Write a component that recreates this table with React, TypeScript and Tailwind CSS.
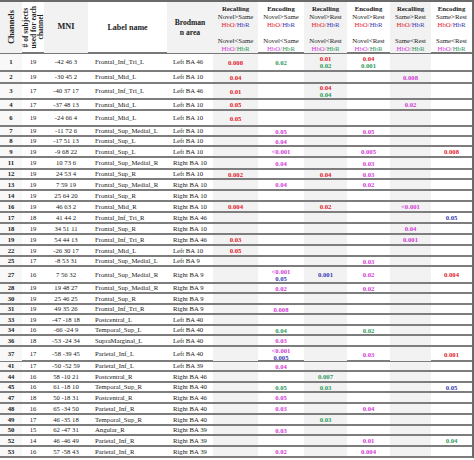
import React from "react";

type Tone = "r" | "g" | "m" | "b";
type Val = [string, Tone][] | null;

const tone: Record<Tone, string> = {
   r: "text-[#e41a2c]",
   g: "text-[#2f9a5c]",
   m: "text-[#d33ad9]",
   b: "text-[#3b3bb5]",
};

type Row = {
   ch: string;
   n: string;
   mni: string;
   label: string;
   ba: string;
   h: string;
   vals: Val[];
};

const _ = null;

const rows: Row[] = [
   { ch: "1", n: "19", mni: "-42 46 3", label: "Frontal_Inf_Tri_L", ba: "Left BA 46", h: "h-[18px]", vals: [[["0.008", "r"]], [["0.02", "g"]], [["0.01", "r"], ["0.02", "g"]], [["0.04", "r"], ["0.001", "g"]], _, _] },
   { ch: "2", n: "19", mni: "-30 45 2", label: "Frontal_Mid_L", ba: "Left BA 10", h: "h-[12px]", vals: [[["0.04", "r"]], _, _, _, [["0.008", "m"]], _] },
   { ch: "3", n: "17", mni: "-40 37 17", label: "Frontal_Inf_Tri_L", ba: "Left BA 46", h: "h-[16px]", vals: [[["0.01", "r"]], _, [["0.04", "r"], ["0.04", "g"]], _, _, _] },
   { ch: "4", n: "17", mni: "-37 48 13", label: "Frontal_Mid_L", ba: "Left BA 10", h: "h-[11px]", vals: [[["0.05", "r"]], _, _, _, [["0.02", "m"]], _] },
   { ch: "6", n: "19", mni: "-24 66 4", label: "Frontal_Mid_L", ba: "Left BA 10", h: "h-[16px]", vals: [[["0.05", "r"]], _, _, _, _, _] },
   { ch: "7", n: "19", mni: "-11 72 6", label: "Frontal_Sup_Medial_L", ba: "Left BA 10", h: "h-[10px]", vals: [_, [["0.05", "m"]], _, [["0.05", "m"]], _, _] },
   { ch: "8", n: "19", mni: "-17 51 13", label: "Frontal_Sup_L", ba: "Left BA 10", h: "h-[10px]", vals: [_, [["0.04", "m"]], _, _, _, _] },
   { ch: "9", n: "19", mni: "-9 68 22", label: "Frontal_Sup_L", ba: "Left BA 10", h: "h-[11px]", vals: [_, [["<0.001", "m"]], _, [["0.005", "m"]], _, [["0.008", "r"]]] },
   { ch: "11", n: "19", mni: "10 73 6", label: "Frontal_Sup_Medial_R", ba: "Right BA 10", h: "h-[12px]", vals: [_, [["0.04", "m"]], _, [["0.03", "m"]], _, _] },
   { ch: "12", n: "19", mni: "24 53 4", label: "Frontal_Sup_R", ba: "Left BA 10", h: "h-[10px]", vals: [[["0.002", "r"]], _, [["0.04", "r"]], [["0.03", "m"]], _, _] },
   { ch: "13", n: "19", mni: "7 59 19", label: "Frontal_Sup_Medial_R", ba: "Right BA 10", h: "h-[11px]", vals: [_, [["0.04", "m"]], _, [["0.02", "m"]], _, _] },
   { ch: "14", n: "19", mni: "25 64 20", label: "Frontal_Sup_R", ba: "Right BA 10", h: "h-[11px]", vals: [_, _, _, _, _, _] },
   { ch: "16", n: "19", mni: "46 63 2", label: "Frontal_Mid_R", ba: "Right BA 10", h: "h-[11px]", vals: [[["0.004", "r"]], _, [["0.02", "r"]], _, [["<0.001", "m"]], _] },
   { ch: "17", n: "18", mni: "41 44 2", label: "Frontal_Inf_Tri_R", ba: "Right BA 46", h: "h-[11px]", vals: [_, _, _, _, _, [["0.05", "b"]]] },
   { ch: "18", n: "19", mni: "34 51 11", label: "Frontal_Sup_R", ba: "Right BA 10", h: "h-[11px]", vals: [_, _, _, _, [["0.04", "m"]], _] },
   { ch: "19", n: "19", mni: "54 44 13", label: "Frontal_Inf_Tri_R", ba: "Right BA 46", h: "h-[11px]", vals: [[["0.03", "r"]], _, _, _, [["0.001", "m"]], _] },
   { ch: "22", n: "19", mni: "-26 30 17", label: "Frontal_Mid_L", ba: "Left BA 10", h: "h-[11px]", vals: [[["0.05", "r"]], _, _, _, _, _] },
   { ch: "25", n: "17", mni: "-8 53 31", label: "Frontal_Sup_Medial_L", ba: "Left BA 9", h: "h-[10px]", vals: [_, _, _, [["0.03", "m"]], _, _] },
   { ch: "27", n: "16", mni: "7 56 32", label: "Frontal_Sup_Medial_R", ba: "Right BA 9", h: "h-[17px]", vals: [_, [["<0.001", "m"], ["0.05", "b"]], [["0.001", "b"]], [["0.02", "m"]], _, [["0.004", "r"]]] },
   { ch: "28", n: "19", mni: "19 48 27", label: "Frontal_Sup_Medial_R", ba: "Right BA 9", h: "h-[10px]", vals: [_, [["0.02", "m"]], _, [["0.02", "m"]], _, _] },
   { ch: "30", n: "19", mni: "25 46 25", label: "Frontal_Sup_R", ba: "Right BA 9", h: "h-[11px]", vals: [_, _, _, _, _, _] },
   { ch: "31", n: "19", mni: "49 35 26", label: "Frontal_Inf_Tri_R", ba: "Right BA 9", h: "h-[10px]", vals: [_, [["0.008", "m"]], _, _, _, _] },
   { ch: "33", n: "19", mni: "-47 -18 18", label: "Postcentral_L", ba: "Left BA 40", h: "h-[11px]", vals: [_, _, _, _, _, _] },
   { ch: "34", n: "16", mni: "-66 -24 9", label: "Temporal_Sup_L", ba: "Left BA 40", h: "h-[10px]", vals: [_, [["0.04", "g"]], _, [["0.02", "g"]], _, _] },
   { ch: "36", n: "18", mni: "-53 -24 34", label: "SupraMarginal_L", ba: "Left BA 40", h: "h-[11px]", vals: [_, [["0.03", "m"]], _, _, _, _] },
   { ch: "37", n: "17", mni: "-58 -39 45", label: "Parietal_Inf_L", ba: "Left BA 40", h: "h-[15px]", vals: [_, [["<0.001", "m"], ["0.005", "b"]], _, [["0.03", "m"]], _, [["0.001", "r"]]] },
   { ch: "41", n: "17", mni: "-50 -52 59", label: "Parietal_Inf_L", ba: "Left BA 39", h: "h-[10px]", vals: [_, [["0.04", "m"]], _, _, _, _] },
   { ch: "44", n: "16", mni: "58 -10 21", label: "Postcentral_R", ba: "Right BA 46", h: "h-[11px]", vals: [_, _, [["0.007", "g"]], _, _, _] },
   { ch: "45", n: "16", mni: "61 -18 10", label: "Temporal_Sup_R", ba: "Right BA 40", h: "h-[10px]", vals: [_, [["0.05", "g"]], [["0.03", "g"]], _, _, [["0.05", "b"]]] },
   { ch: "47", n: "18", mni: "50 -18 31", label: "Postcentral_R", ba: "Right BA 46", h: "h-[11px]", vals: [_, [["0.05", "m"]], _, _, _, _] },
   { ch: "48", n: "16", mni: "65 -34 50", label: "Parietal_Inf_R", ba: "Right BA 40", h: "h-[11px]", vals: [_, [["0.03", "m"]], _, [["0.04", "m"]], _, _] },
   { ch: "49", n: "17", mni: "46 -35 18", label: "Temporal_Sup_R", ba: "Right BA 40", h: "h-[11px]", vals: [_, _, [["0.03", "g"]], _, _, _] },
   { ch: "50", n: "15", mni: "62 -47 31", label: "Angular_R", ba: "Right BA 39", h: "h-[10px]", vals: [_, [["0.03", "m"]], _, _, _, _] },
   { ch: "52", n: "14", mni: "46 -46 49", label: "Parietal_Inf_R", ba: "Right BA 39", h: "h-[11px]", vals: [_, _, _, [["0.01", "m"]], _, [["0.04", "g"]]] },
   { ch: "53", n: "16", mni: "57 -58 43", label: "Parietal_Inf_R", ba: "Right BA 39", h: "h-[11px]", vals: [_, [["0.02", "m"]], _, [["0.004", "m"]], _, _] },
];

const groups = [
   { title: "Recalling", up: "Novel>Same", down: "Novel<Same" },
   { title: "Encoding", up: "Novel>Same", down: "Novel<Same" },
   { title: "Recalling", up: "Novel>Rest", down: "Novel<Rest" },
   { title: "Encoding", up: "Novel>Rest", down: "Novel<Rest" },
   { title: "Recalling", up: "Same>Rest", down: "Same<Rest" },
   { title: "Encoding", up: "Same>Rest", down: "Same<Rest" },
];

const gridCols =
   "grid grid-cols-[22px_22px_44px_79px_46px_45px_46px_43px_43px_41px_41px]";

function Header() {
   return (
      <div className={`${gridCols} h-[52px] border-b-2 border-[#777]`}>
         <div className="flex items-center justify-center bg-[#f2f2f2]">
            <span className="[writing-mode:vertical-rl] rotate-180 text-[8.5px] font-bold leading-[9px]">
               Channels
            </span>
         </div>
         <div className="flex items-center justify-center">
            <span className="[writing-mode:vertical-rl] rotate-180 text-center text-[7.5px] font-bold leading-[7.5px]">
               # of subjects
               <br />
               used for each
               <br />
               channel
            </span>
         </div>
         <div className="flex items-center justify-center bg-[#f2f2f2] text-[8.3px] font-bold">
            MNI
         </div>
         <div className="flex items-center justify-center text-[8px] font-bold">
            Label name
         </div>
         <div className="flex flex-col items-center justify-center bg-[#f2f2f2] text-center text-[7.6px] font-bold leading-[10px]">
            <span>Brodman</span>
            <span>n area</span>
         </div>
         {groups.map((g, i) => (
            <div
               key={i}
               className={`flex flex-col items-center pt-[3px] text-[6.8px] leading-[8px] ${
                  i % 2 === 0 ? "bg-[#f2f2f2]" : ""
               }`}
            >
               <span className="font-bold">{g.title}</span>
               <span>{g.up}</span>
               <span>
                  <span className="text-[#e41a2c]">HbO/</span>
                  <span className="text-[#3b3bb5]">HbR</span>
               </span>
               <span className="mt-[8px]">{g.down}</span>
               <span>
                  <span className="text-[#d33ad9]">HbO/</span>
                  <span className="text-[#2f9a5c]">HbR</span>
               </span>
            </div>
         ))}
      </div>
   );
}

function ValueCell({ val, shaded }: { val: Val; shaded: boolean }) {
   return (
      <div
         className={`flex flex-col items-center justify-center font-bold leading-[7px] ${
            shaded ? "bg-[#f2f2f2]" : ""
         }`}
      >
         {val?.map(([v, t], k) => (
            <span key={k} className={tone[t]}>
               {v}
            </span>
         ))}
      </div>
   );
}

export default function App() {
   return (
      <div className="w-[474px] h-[460px] overflow-hidden bg-white font-['Liberation_Serif',serif] text-[#222]">
         <div className="w-[474px] border-t-2 border-r-2 border-[#6a6a6a]">
            <Header />
            {rows.map((row) => (
               <div
                  key={row.ch}
                  className={`${gridCols} ${row.h} border-b-2 border-[#7d7d7d] text-[6.7px] leading-[8px]`}
               >
                  <div className="flex items-center justify-center bg-[#f8f8f8] font-bold">
                     {row.ch}
                  </div>
                  <div className="flex items-center justify-center">{row.n}</div>
                  <div className="flex items-center justify-center whitespace-nowrap">
                     {row.mni}
                  </div>
                  <div className="flex items-center pl-[7px] whitespace-nowrap">
                     {row.label}
                  </div>
                  <div className="flex items-center pl-[6px] whitespace-nowrap">
                     {row.ba}
                  </div>
                  {row.vals.map((v, i) => (
                     <ValueCell key={i} val={v} shaded={i % 2 === 0} />
                  ))}
               </div>
            ))}
         </div>
      </div>
   );
}
